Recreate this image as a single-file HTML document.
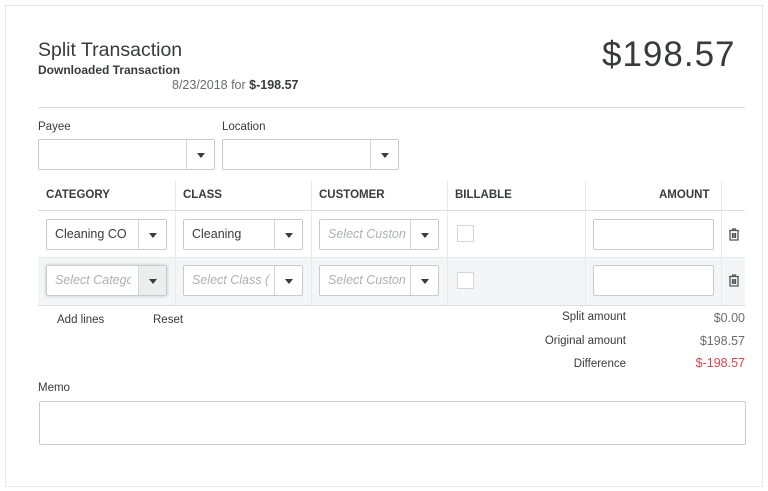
<!DOCTYPE html>
<html><head><meta charset="utf-8"><style>
*{box-sizing:border-box;margin:0;padding:0}
body{width:768px;height:491px;background:#fff;font-family:"Liberation Sans",sans-serif;color:#393a3d;position:relative;overflow:hidden}
.a{position:absolute}
.box{position:absolute;border:1px solid #c9cacc;border-radius:2px;background:#fff}
.dd{position:absolute;top:0;bottom:0;width:28px;right:0;border-left:1px solid #d4d5d7}
.dd:after{content:"";position:absolute;left:50%;top:50%;margin:-2px 0 0 -4px;border:4px solid transparent;border-top:5px solid #393a3d;border-bottom:0}
.ph{position:absolute;left:8px;top:7px;font-size:12.5px;font-style:italic;color:#aeb0b3;white-space:nowrap;overflow:hidden}
.hd{position:absolute;top:189px;font-size:11.5px;font-weight:bold;color:#393a3d}
.vl{position:absolute;top:180px;height:125px;width:1px;background:#e8e9eb}
.cb{position:absolute;width:17px;height:17px;border:1px solid #d4d5d7;background:#fff}
.tr{position:absolute;width:12px;height:13px}
.lbl{position:absolute;font-size:11.5px;color:#393a3d}
</style></head><body>
<div class="a" style="left:5px;top:5px;width:758px;height:482px;border:1px solid #e6e7e9"></div>
<div class="a" style="left:38px;top:39px;font-size:19.5px">Split Transaction</div>
<div class="a" style="left:38px;top:63px;font-size:12px;font-weight:bold">Downloaded Transaction</div>
<div class="a" style="left:172px;top:78px;font-size:12.5px;color:#6b6c72">8/23/2018 for <b style="color:#393a3d">$-198.57</b></div>
<div class="a" style="left:602px;top:35px;font-size:35px;color:#393a3d;letter-spacing:1px">$198.57</div>
<div class="a" style="left:38px;top:107px;width:707px;height:1px;background:#dcdddf"></div>
<div class="lbl" style="left:38px;top:121px">Payee</div>
<div class="lbl" style="left:222px;top:121px">Location</div>
<div class="box" style="left:38px;top:139px;width:177px;height:31px"><div class="dd"></div></div>
<div class="box" style="left:222px;top:139px;width:177px;height:31px"><div class="dd"></div></div>
<div class="a" style="left:38px;top:257px;width:707px;height:48px;background:#f4f5f7"></div>
<div class="a" style="left:38px;top:210px;width:707px;height:1px;background:#dcdddf"></div>
<div class="a" style="left:38px;top:257px;width:707px;height:1px;background:#e6e7e9"></div>
<div class="a" style="left:38px;top:305px;width:707px;height:1px;background:#dcdddf"></div>
<div class="vl" style="left:175px"></div><div class="vl" style="left:311px"></div><div class="vl" style="left:447px"></div><div class="vl" style="left:585px"></div><div class="vl" style="left:721px"></div>
<div class="hd" style="left:46px">CATEGORY</div>
<div class="hd" style="left:183px">CLASS</div>
<div class="hd" style="left:319px">CUSTOMER</div>
<div class="hd" style="left:455px">BILLABLE</div>
<div class="hd" style="left:659px">AMOUNT</div>
<div class="box" style="left:46px;top:219px;width:121px;height:31px"><div class="ph" style="font-style:normal;color:#393a3d;width:80px">Cleaning CO</div><div class="dd"></div></div>
<div class="box" style="left:183px;top:219px;width:120px;height:31px"><div class="ph" style="font-style:normal;color:#393a3d">Cleaning</div><div class="dd"></div></div>
<div class="box" style="left:319px;top:219px;width:120px;height:31px"><div class="ph" style="width:82px">Select Custon</div><div class="dd"></div></div>
<div class="cb" style="left:457px;top:225px"></div>
<div class="box" style="left:593px;top:219px;width:121px;height:31px"></div>
<div class="box" style="left:46px;top:265px;width:121px;height:31px;box-shadow:0 0 3px rgba(0,0,0,.2)"><div class="ph" style="width:76px">Select Catego</div><div class="dd" style="background:#eceded"></div></div>
<div class="box" style="left:183px;top:265px;width:120px;height:31px"><div class="ph" style="width:82px">Select Class (</div><div class="dd"></div></div>
<div class="box" style="left:319px;top:265px;width:120px;height:31px"><div class="ph" style="width:82px">Select Custon</div><div class="dd"></div></div>
<div class="cb" style="left:457px;top:272px"></div>
<div class="box" style="left:593px;top:265px;width:121px;height:31px"></div>
<svg class="tr" style="left:728px;top:228px" viewBox="0 0 12 13"><path d="M1 2.5h10M4.5 2.5V1h3v1.5M2 2.5v9.5h8V2.5M4.5 5v5M6 5v5M7.5 5v5" stroke="#555" stroke-width="1.3" fill="none"/></svg>
<svg class="tr" style="left:728px;top:274px" viewBox="0 0 12 13"><path d="M1 2.5h10M4.5 2.5V1h3v1.5M2 2.5v9.5h8V2.5M4.5 5v5M6 5v5M7.5 5v5" stroke="#555" stroke-width="1.3" fill="none"/></svg>
<div class="lbl" style="left:57px;top:314px">Add lines</div>
<div class="lbl" style="left:153px;top:314px">Reset</div>
<div class="lbl" style="right:142px;top:311px">Split amount</div>
<div class="lbl" style="right:142px;top:335px">Original amount</div>
<div class="lbl" style="right:142px;top:358px">Difference</div>
<div class="a" style="right:23px;top:311px;font-size:12.5px;color:#6b6c72">$0.00</div>
<div class="a" style="right:23px;top:334px;font-size:12.5px;color:#6b6c72">$198.57</div>
<div class="a" style="right:23px;top:356px;font-size:12.5px;color:#e0424b">$-198.57</div>
<div class="lbl" style="left:38px;top:382px">Memo</div>
<div class="box" style="left:39px;top:401px;width:707px;height:44px"></div>
</body></html>
